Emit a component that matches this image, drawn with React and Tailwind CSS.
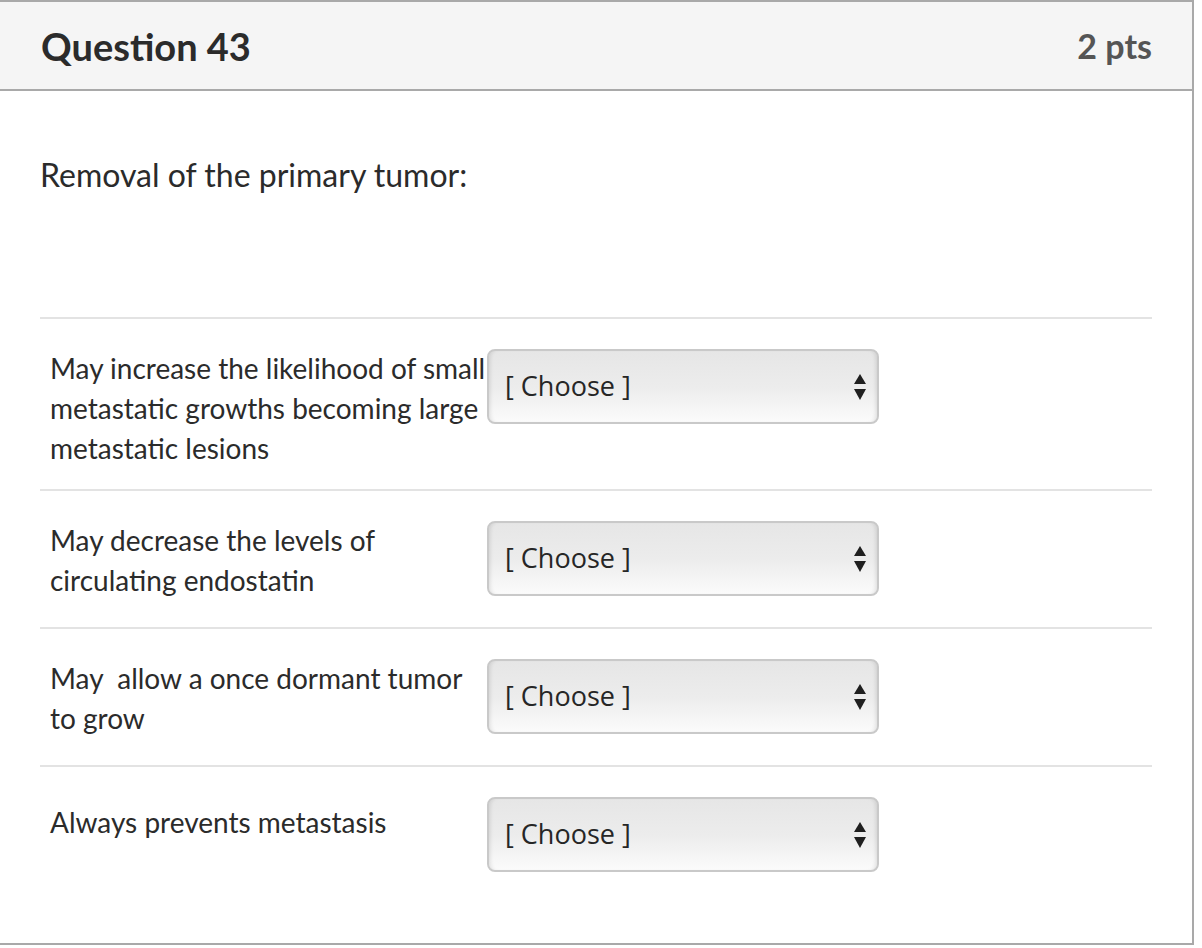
import React from 'react';

const answers = [
  { text: 'May increase the likelihood of small metastatic growths becoming large metastatic lesions', height: 'h-[172px]', textPad: 'pt-0' },
  { text: 'May decrease the levels of circulating endostatin', height: 'h-[138px]', textPad: 'pt-0' },
  { text: 'May\u00a0 allow a once dormant tumor to grow', height: 'h-[138px]', textPad: 'pt-0' },
  { text: 'Always prevents metastasis', height: 'h-[138px]', textPad: 'pt-[6px]' },
];

const SelectArrows = () => (
  <svg width="12" height="26" viewBox="0 0 12 26" className="shrink-0">
    <path d="M6 0 L12 10 L0 10 Z" fill="#1f1f1f" />
    <path d="M0 15 L12 15 L6 26 Z" fill="#1f1f1f" />
  </svg>
);

const ChooseSelect = () => (
  <div className="flex items-center justify-between w-[392px] h-[75px] pl-[16px] pr-[11px] rounded-[8px] border-2 border-[#c9c9c9] bg-linear-to-b from-[#e6e6e6] via-[#ececec] to-[#fbfbfb] shadow-[inset_4px_0_4px_-3px_rgba(0,0,0,0.12),inset_-4px_0_4px_-3px_rgba(0,0,0,0.12)]">
    <span className="text-[27px] text-[#262626] font-['Open_Sans',sans-serif]">[ Choose ]</span>
    <SelectArrows />
  </div>
);

export default function App() {
  return (
    <div className="w-[1202px] h-[948px] bg-white font-['Lato',sans-serif]">
      <div className="w-[1194px] h-[945px] border-t-2 border-r-2 border-b-2 border-[#a9a9a9] flex flex-col">
        <div className="h-[89px] shrink-0 bg-[#f5f5f5] border-b-2 border-[#a9a9a9] flex items-center justify-between pl-[41px] pr-[40px]">
          <h2 className="text-[38px] font-bold text-[#2b2b2b] leading-none">Question 43</h2>
          <span className="text-[34px] font-bold text-[#555555] leading-none">2 pts</span>
        </div>

        <div className="px-[40px] pt-[64px]">
          <p className="text-[32px] text-[#2b2b2b] leading-[40px]">Removal of the primary tumor:</p>

          <div className="mt-[122px]">
            {answers.map((a, i) => (
              <div key={i} className={`${a.height} border-t-2 border-[#e3e3e3] flex items-start pt-[29px] pl-[10px]`}>
                <div className={`w-[437px] text-[28px] leading-[40px] text-[#2b2b2b] ${a.textPad}`}>{a.text}</div>
                <div className="pt-[1px]">
                  <ChooseSelect />
                </div>
              </div>
            ))}
          </div>
        </div>
      </div>
    </div>
  );
}
